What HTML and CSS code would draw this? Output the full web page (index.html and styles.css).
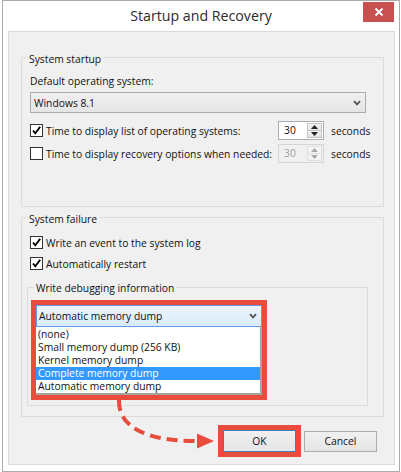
FILE: index.html
```html
<!DOCTYPE html>
<html>
<head>
<meta charset="utf-8">
<title>Startup and Recovery</title>
<link rel="stylesheet" href="styles.css">
</head>
<body>
<div class="window">
  <div class="titlebar">
    <div class="title">Startup and Recovery</div>
    <div class="close"><svg width="10" height="10" viewBox="0 0 10 10"><path d="M1.5 1.5 L8.5 8.5 M8.5 1.5 L1.5 8.5" stroke="#fff" stroke-width="1.8" fill="none"/></svg></div>
  </div>
  <div class="panel">
    <div class="group g-startup">
      <div class="legend">System startup</div>
      <div class="label">Default operating system:</div>
      <div class="select"><span>Windows 8.1</span><svg class="chev" width="8" height="6" viewBox="0 0 8 6"><path d="M1 1.2 L4 4.4 L7 1.2" stroke="#555" stroke-width="1.8" fill="none"/></svg></div>
      <div class="spin-grid">
        <span class="cb"><svg width="11" height="11" viewBox="0 0 11 11"><path d="M2 5.5 L4.3 8.3 L9.2 1.8" stroke="#000" stroke-width="1.9" fill="none"/></svg></span>
        <span class="cb-text">Time to display list of operating systems:</span>
        <div class="spin">
          <span class="spin-val">30</span>
          <span class="spin-btns">
            <span class="sb"><svg width="7" height="4" viewBox="0 0 7 4"><path d="M0 4 L3.5 0 L7 4Z"/></svg></span>
            <span class="sb"><svg width="7" height="4" viewBox="0 0 7 4"><path d="M0 0 L3.5 4 L7 0Z"/></svg></span>
          </span>
        </div>
        <span class="unit">seconds</span>

        <span class="cb"></span>
        <span class="cb-text">Time to display recovery options when needed:</span>
        <div class="spin disabled">
          <span class="spin-val">30</span>
          <span class="spin-btns">
            <span class="sb"><svg width="7" height="4" viewBox="0 0 7 4"><path d="M0 4 L3.5 0 L7 4Z"/></svg></span>
            <span class="sb"><svg width="7" height="4" viewBox="0 0 7 4"><path d="M0 0 L3.5 4 L7 0Z"/></svg></span>
          </span>
        </div>
        <span class="unit">seconds</span>
      </div>
    </div>

    <div class="group g-failure">
      <div class="legend">System failure</div>
      <div class="check-row first">
        <span class="cb"><svg width="11" height="11" viewBox="0 0 11 11"><path d="M2 5.5 L4.3 8.3 L9.2 1.8" stroke="#000" stroke-width="1.9" fill="none"/></svg></span>
        <span>Write an event to the system log</span>
      </div>
      <div class="check-row">
        <span class="cb"><svg width="11" height="11" viewBox="0 0 11 11"><path d="M2 5.5 L4.3 8.3 L9.2 1.8" stroke="#000" stroke-width="1.9" fill="none"/></svg></span>
        <span>Automatically restart</span>
      </div>
      <div class="group g-debug">
        <div class="legend">Write debugging information</div>
        <div class="hl hl-combo">
          <div class="combo"><span>Automatic memory dump</span><svg class="chev" width="8" height="6" viewBox="0 0 8 6"><path d="M1 1.2 L4 4.4 L7 1.2" stroke="#555" stroke-width="1.8" fill="none"/></svg></div>
          <ul class="list">
            <li>(none)</li>
            <li>Small memory dump (256 KB)</li>
            <li>Kernel memory dump</li>
            <li class="sel">Complete memory dump</li>
            <li>Automatic memory dump</li>
          </ul>
        </div>
      </div>
    </div>

    <div class="buttons">
      <div class="hl hl-ok"><button class="btn default">OK</button></div>
      <button class="btn cancel">Cancel</button>
    </div>
  </div>
</div>
<svg class="arrow" width="401" height="472" viewBox="0 0 401 472">
  <path d="M119 400 C 118 428, 148 441, 197 441" stroke="#e84c3d" stroke-width="4" fill="none" stroke-dasharray="11 6"/>
  <polygon points="197,433.5 214,441 197,448.5" fill="#e84c3d"/>
</svg>
</body>
</html>
```

FILE: styles.css
```css
* { box-sizing: border-box; }
html, body { margin: 0; padding: 0; background: #fff; }
body {
  position: relative;
  width: 401px;
  height: 472px;
  overflow: hidden;
  font-family: "Open Sans", "Noto Sans", sans-serif;
  font-size: 10.3px;
  color: #111;
}
.window {
  margin-left: 2px;
  width: 398px;
  height: 472px;
  border: 1px solid #ababab;
  background: #fff;
}
.titlebar {
  display: grid;
  grid-template-columns: 1fr auto 1fr;
  height: 30px;
}
.title {
  grid-column: 2;
  font-size: 14.2px;
  line-height: 30px;
  color: #2b2b2b;
  white-space: nowrap;
}
.close {
  grid-column: 3;
  justify-self: end;
  width: 31px;
  height: 20px;
  margin: 1px 5px 0 0;
  background: #c75050;
  display: flex;
  align-items: center;
  justify-content: center;
}
.panel {
  height: 434px;
  margin: 0 4px 0 5px;
  padding: 25px 10px 0 12px;
  background: #f0f0f0;
  border: 1px solid #d9d9d9;
}
.group { border: 1px solid #dcdcdc; }
.legend {
  width: fit-content;
  margin: -7px 0 0 5px;
  padding: 0 2px;
  line-height: 16px;
  background: #f0f0f0;
  white-space: nowrap;
}
.g-startup { height: 150px; }
.label { margin: 6px 0 0 8px; line-height: 16px; }
.select {
  display: flex;
  align-items: center;
  justify-content: space-between;
  width: 336px;
  height: 21px;
  margin: 3px 0 0 8px;
  padding: 0 4px 0 3px;
  border: 1px solid #acacac;
  background: linear-gradient(#f0f0f0, #e5e5e5);
}
.spin-grid {
  display: grid;
  grid-template-columns: 13px 229px 46px auto;
  grid-auto-rows: 19px;
  column-gap: 3px;
  row-gap: 4px;
  align-items: center;
  margin: 8px 0 0 8px;
}
.cb {
  width: 13px;
  height: 13px;
  border: 1px solid #333;
  background: #fff;
  display: flex;
  align-items: center;
  justify-content: center;
  flex: 0 0 13px;
}
.cb svg { display: block; }
.cb-text { white-space: nowrap; }
.unit { margin-left: 4px; }
.spin {
  display: flex;
  width: 46px;
  height: 19px;
  border: 1px solid #abadb3;
  background: #fff;
}
.spin-val { flex: 1; padding-left: 5px; line-height: 17px; }
.spin-btns {
  width: 17px;
  display: flex;
  flex-direction: column;
  padding: 1px;
}
.sb {
  flex: 1;
  display: flex;
  align-items: center;
  justify-content: center;
  background: linear-gradient(#f3f3f3, #e4e4e4);
  border: 1px solid #c4c4c4;
}
.sb + .sb { border-top: none; }
.sb svg { display: block; fill: #222; }
.spin.disabled { background: #f0f0f0; border-color: #d5d5d5; }
.spin.disabled .spin-val { color: #a0a0a0; }
.spin.disabled .sb { background: #f4f4f4; border-color: #dedede; }
.spin.disabled .sb svg { fill: #a8a8a8; }

.g-failure { margin-top: 10px; height: 200px; }
.check-row {
  display: flex;
  align-items: center;
  gap: 3px;
  height: 19px;
  margin: 2px 0 0 8px;
  white-space: nowrap;
}
.check-row.first { margin-top: 6px; }
.g-debug {
  margin: 14px 15px 0 5px;
  height: 119px;
}
.g-debug > .legend { margin: -8px 0 0 6px; }
.hl { border: 5px solid #e84c3d; }
.hl-combo {
  width: 236px;
  margin: 4px 0 0 3px;
}
.combo {
  display: flex;
  align-items: center;
  justify-content: space-between;
  height: 22px;
  padding: 0 4px 0 2px;
  border: 1px solid #5e9fe4;
  background: linear-gradient(#eef5fd, #d9eafb);
  white-space: nowrap;
}
.list {
  list-style: none;
  margin: 0;
  height: 68px;
  padding: 1px 0 0 0;
  background: #fff;
  border-right: 2px solid #a3a3a3;
  border-bottom: 2px solid #a3a3a3;
}
.list li {
  height: 13px;
  line-height: 13px;
  padding-left: 2px;
  white-space: nowrap;
}
.list li.sel { background: #3399ff; color: #fff; }

.buttons {
  display: flex;
  justify-content: flex-end;
  align-items: center;
  gap: 3px;
  margin: 8px 7px 0 0;
}
.btn {
  font-family: inherit;
  font-size: 10.3px;
  color: #111;
  width: 73px;
  padding: 0;
  border: 1px solid #acacac;
  background: linear-gradient(#f0f0f0, #e5e5e5);
}
.btn.default { display: block; height: 22px; border-color: #3c7fb1; }
.btn.cancel { height: 21px; }
.arrow {
  position: absolute;
  left: 0;
  top: 0;
  pointer-events: none;
}
```
